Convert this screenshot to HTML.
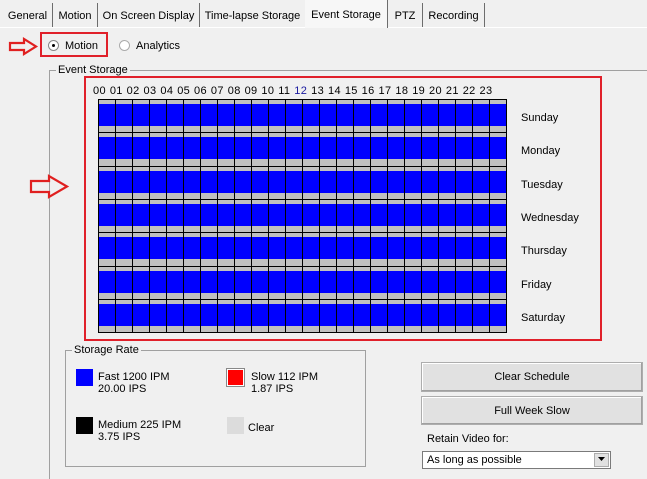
<!DOCTYPE html>
<html style="overflow:hidden"><head><style>
html,body{overflow:hidden}
body{margin:0;width:647px;height:479px;background:#f0f0f0;font-family:"Liberation Sans",sans-serif;font-size:11px;color:#000;position:relative}
.a{position:absolute}
.tab{position:absolute;top:3px;height:24px;line-height:26px;text-align:center;border-right:1px solid #6d6d6d;box-sizing:border-box}
.day{position:absolute;left:98px;width:409px;box-sizing:border-box;border-top:1px solid #000;
background:linear-gradient(#c0c0c0 4px,#0000ff 4px,#0000ff 26px,#c0c0c0 26px)}
.v{position:absolute;top:99px;width:1px;height:234px;background:#000}
.lbl{position:absolute;left:521px}
.btn{position:absolute;left:421px;width:222px;background:#e1e1e1;border:1px solid #adadad;box-shadow:inset -1px -1px #a0a0a0, inset 1px 1px #fff;text-align:center;box-sizing:border-box}
</style></head><body>
<div class="a" style="left:0;top:27px;width:647px;height:1px;background:#fff"></div>
<div class="tab" style="left:3px;width:50px">General</div>
<div class="tab" style="left:53px;width:45px">Motion</div>
<div class="tab" style="left:98px;width:102px">On Screen Display</div>
<div class="tab" style="left:200px;width:105px;border-right:none">Time-lapse Storage</div>
<div class="tab" style="left:305px;top:0;height:28px;width:83px;background:#f7f7f7;line-height:30px;border-right:1px solid #6d6d6d">Event Storage</div>
<div class="tab" style="left:388px;width:35px">PTZ</div>
<div class="tab" style="left:423px;width:62px">Recording</div>

<svg class="a" style="left:8px;top:37px" width="32" height="19"><path d="M2 6H16V2L28 9.5 16 17V13H2Z" fill="none" stroke="#e02020" stroke-width="2.2"/></svg>
<div class="a" style="left:40px;top:32px;width:64px;height:21px;border:2px solid #e0202a"></div>
<div class="a" style="left:48px;top:40px;width:11px;height:11px;border-radius:50%;background:#fff;border:1px solid #888;box-sizing:border-box"></div>
<div class="a" style="left:52px;top:44px;width:3px;height:3px;border-radius:50%;background:#000"></div>
<div class="a" style="left:65px;top:40px">Motion</div>
<div class="a" style="left:119px;top:40px;width:11px;height:11px;border-radius:50%;background:#fff;border:1px solid #aaa;box-sizing:border-box"></div>
<div class="a" style="left:136px;top:40px">Analytics</div>

<div class="a" style="left:49px;top:70px;width:598px;height:409px;border:1px solid #a0a0a0;border-right:none;border-bottom:none;box-sizing:border-box"></div>
<div class="a" style="left:56px;top:64px;background:#f0f0f0;padding:0 2px">Event Storage</div>
<div class="a" style="left:84px;top:76px;width:514px;height:261px;border:2px solid #e0202a"></div>
<svg class="a" style="left:29px;top:174px" width="42" height="25"><path d="M2 7H20V2L38 12.5 20 23V18H2Z" fill="none" stroke="#e02020" stroke-width="2.2"/></svg>

<div class="a" style="left:93px;top:85px;white-space:nowrap;letter-spacing:0.35px;word-spacing:0.5px">00 01 02 03 04 05 06 07 08 09 10 11 <span style="color:#1a1aa0">12</span> 13 14 15 16 17 18 19 20 21 22 23</div>

<div class="day" style="top:99px;height:33px"></div>
<div class="day" style="top:132px;height:34px"></div>
<div class="day" style="top:166px;height:33px"></div>
<div class="day" style="top:199px;height:33px"></div>
<div class="day" style="top:232px;height:34px"></div>
<div class="day" style="top:266px;height:33px"></div>
<div class="day" style="top:299px;height:34px;border-bottom:1px solid #000"></div>
<div class="v" style="left:98px"></div><div class="v" style="left:115px"></div><div class="v" style="left:132px"></div><div class="v" style="left:149px"></div><div class="v" style="left:166px"></div><div class="v" style="left:183px"></div><div class="v" style="left:200px"></div><div class="v" style="left:217px"></div><div class="v" style="left:234px"></div><div class="v" style="left:251px"></div><div class="v" style="left:268px"></div><div class="v" style="left:285px"></div><div class="v" style="left:302px"></div><div class="v" style="left:319px"></div><div class="v" style="left:336px"></div><div class="v" style="left:353px"></div><div class="v" style="left:370px"></div><div class="v" style="left:387px"></div><div class="v" style="left:404px"></div><div class="v" style="left:421px"></div><div class="v" style="left:438px"></div><div class="v" style="left:455px"></div><div class="v" style="left:472px"></div><div class="v" style="left:489px"></div><div class="v" style="left:506px"></div>

<div class="lbl" style="top:112px">Sunday</div>
<div class="lbl" style="top:145px">Monday</div>
<div class="lbl" style="top:179px">Tuesday</div>
<div class="lbl" style="top:212px">Wednesday</div>
<div class="lbl" style="top:245px">Thursday</div>
<div class="lbl" style="top:279px">Friday</div>
<div class="lbl" style="top:312px">Saturday</div>

<div class="a" style="left:65px;top:350px;width:301px;height:117px;border:1px solid #a0a0a0;box-sizing:border-box"></div>
<div class="a" style="left:72px;top:344px;background:#f0f0f0;padding:0 2px">Storage Rate</div>
<div class="a" style="left:76px;top:369px;width:17px;height:17px;background:#0000ff"></div>
<div class="a" style="left:98px;top:371px;line-height:12px">Fast 1200 IPM<br>20.00 IPS</div>
<div class="a" style="left:226px;top:368px;width:19px;height:19px;background:#ff0000;border:1px solid #888;box-shadow:inset 0 0 0 1px #fff;box-sizing:border-box"></div>
<div class="a" style="left:251px;top:371px;line-height:12px">Slow 112 IPM<br>1.87 IPS</div>
<div class="a" style="left:76px;top:417px;width:17px;height:17px;background:#000"></div>
<div class="a" style="left:98px;top:419px;line-height:12px">Medium 225 IPM<br>3.75 IPS</div>
<div class="a" style="left:227px;top:417px;width:17px;height:17px;background:#dcdcdc"></div>
<div class="a" style="left:248px;top:422px">Clear</div>

<div class="btn" style="top:362px;height:30px;line-height:29px">Clear Schedule</div>
<div class="btn" style="top:396px;height:29px;line-height:28px">Full Week Slow</div>
<div class="a" style="left:427px;top:433px">Retain Video for:</div>
<div class="a" style="left:422px;top:451px;width:189px;height:18px;background:#fff;border:1px solid #7a7a7a;box-sizing:border-box"></div>
<div class="a" style="left:427px;top:454px">As long as possible</div>
<div class="a" style="left:594px;top:453px;width:15px;height:14px;background:#e1e1e1;border:1px solid #adadad;box-sizing:border-box"></div>
<svg class="a" style="left:597px;top:457px" width="9" height="5"><path d="M1 0H8L4.5 4Z" fill="#000"/></svg>
</body></html>
